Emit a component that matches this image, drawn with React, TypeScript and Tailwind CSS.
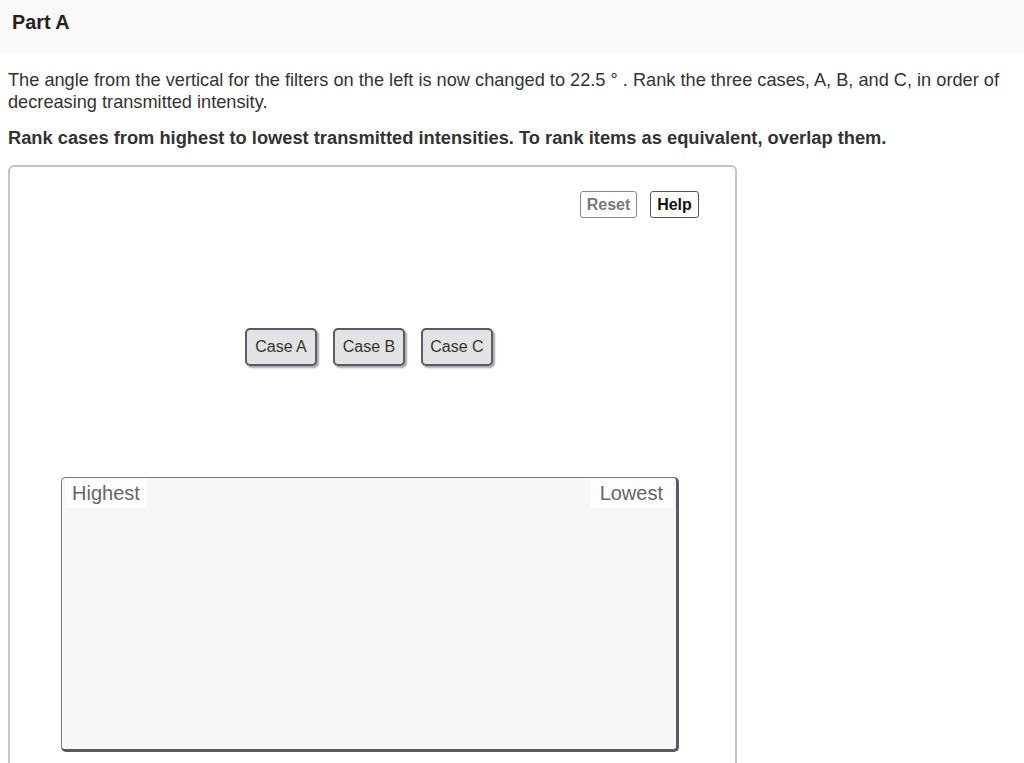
export default function App() {
  const cases = ["Case A", "Case B", "Case C"];

  return (
    <div className="min-h-screen bg-white text-[#333] font-['Liberation_Sans',Arial,sans-serif]">
      {/* Part header */}
      <div className="h-[54px] bg-[#f9f9f9] px-3 pt-[11px]">
        <h2 className="text-[19.8px] font-bold leading-[22px] text-[#222]">Part A</h2>
      </div>

      <div className="px-2">
        <p className="mt-[15px] text-[18.2px] leading-[22px]">
          The angle from the vertical for the filters on the left is now changed to 22.5 ° . Rank the three cases,
          A, B, and C, in order of decreasing transmitted intensity.
        </p>
        <p className="mt-[14px] text-[18.3px] font-bold leading-[22px]">
          Rank cases from highest to lowest transmitted intensities. To rank items as equivalent, overlap them.
        </p>

        {/* Ranking tool */}
        <div className="mt-[16px] w-[729px] h-[620px] rounded-t-[6px] border-2 border-b-0 border-[#c4c4c4]">
          <div className="flex justify-end gap-[13px] pt-[24px] pr-[36px]">
            <button className="h-[27px] w-[57px] rounded-[3px] border border-[#8a8a8a] bg-white text-[16px] font-bold text-[#7a7a7a]">
              Reset
            </button>
            <button className="h-[27px] w-[49px] rounded-[3px] border border-[#555] bg-white text-[16px] font-bold text-[#111]">
              Help
            </button>
          </div>

          <div className="mt-[110px] flex gap-[16px] pl-[235px]">
            {cases.map((c) => (
              <div
                key={c}
                className="flex h-[38px] w-[72px] items-center justify-center rounded-[5px] border-2 border-[#5c5c68] bg-[#e3e3e3] text-[16px] text-[#333] shadow-[2px_2px_2px_rgba(0,0,0,0.35)]"
              >
                {c}
              </div>
            ))}
          </div>

          <div className="ml-[51px] mt-[111px] h-[275px] w-[618px] rounded-[5px] border border-[#777782] border-b-[3px] border-r-[3px] border-b-[#5a5a66] border-r-[#5a5a66] bg-[#f7f7f8]">
            <div className="flex justify-between px-[3px]">
              <span className="bg-[#fdfdfd] px-[7px] py-[3px] text-[20px] leading-[24px] text-[#666]">Highest</span>
              <span className="bg-[#fdfdfd] px-[10px] py-[3px] text-[20px] leading-[24px] text-[#666]">Lowest</span>
            </div>
          </div>
        </div>
      </div>
    </div>
  );
}
